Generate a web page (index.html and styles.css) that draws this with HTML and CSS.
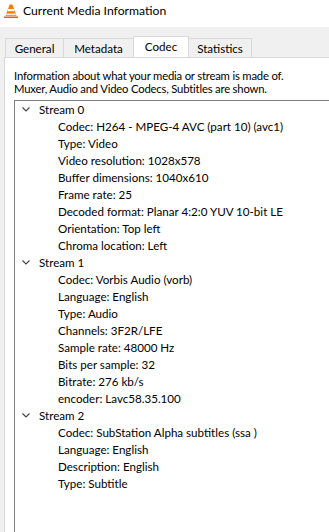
FILE: index.html
```html
<!DOCTYPE html>
<html lang="en">

<head>
  <meta charset="UTF-8">
  <meta name="viewport" content="width=device-width, initial-scale=1.0">
  <title>Current Media Information</title>
  <link rel="stylesheet" href="styles.css">
</head>

<body>
  <div class="titlebar">
    <svg class="cone" width="16" height="16" viewBox="0 0 16 16">
      <path d="M1 13.5 L15 13.5 L15 15 L1 15 Z" fill="#e85e00" />
      <path d="M2.5 13 L6.6 1.5 L9.4 1.5 L13.5 13 Z" fill="#f47c06" />
      <path d="M5.2 6 L10.8 6 L11.6 8.2 L4.4 8.2 Z" fill="#ffffff" />
      <path d="M3.6 10.6 L12.4 10.6 L13 12.3 L3 12.3 Z" fill="#ffffff" opacity="0.85" />
    </svg>
    <span class="title">Current Media Information</span>
  </div>

  <div class="dialog">
    <ul class="tabs">
      <li class="tab general">General</li>
      <li class="tab metadata">Metadata</li>
      <li class="tab codec active">Codec</li>
      <li class="tab statistics">Statistics</li>
    </ul>

    <div class="pane">
      <p class="desc">Information about what your media or stream is made of.<br>
        Muxer, Audio and Video Codecs, Subtitles are shown.</p>

      <div class="tree">
        <div class="stream">
          <div class="row head"><svg class="chev" width="8" height="5" viewBox="0 0 8 5"><path d="M0.5 0.5 L4 4 L7.5 0.5" fill="none" stroke="#444" stroke-width="1.1" /></svg>Stream 0</div>
          <div class="row item">Codec: H264 - MPEG-4 AVC (part 10) (avc1)</div>
          <div class="row item">Type: Video</div>
          <div class="row item">Video resolution: 1028x578</div>
          <div class="row item">Buffer dimensions: 1040x610</div>
          <div class="row item">Frame rate: 25</div>
          <div class="row item">Decoded format: Planar 4:2:0 YUV 10-bit LE</div>
          <div class="row item">Orientation: Top left</div>
          <div class="row item">Chroma location: Left</div>
        </div>
        <div class="stream">
          <div class="row head"><svg class="chev" width="8" height="5" viewBox="0 0 8 5"><path d="M0.5 0.5 L4 4 L7.5 0.5" fill="none" stroke="#444" stroke-width="1.1" /></svg>Stream 1</div>
          <div class="row item">Codec: Vorbis Audio (vorb)</div>
          <div class="row item">Language: English</div>
          <div class="row item">Type: Audio</div>
          <div class="row item">Channels: 3F2R/LFE</div>
          <div class="row item">Sample rate: 48000 Hz</div>
          <div class="row item">Bits per sample: 32</div>
          <div class="row item">Bitrate: 276 kb/s</div>
          <div class="row item">encoder: Lavc58.35.100</div>
        </div>
        <div class="stream">
          <div class="row head"><svg class="chev" width="8" height="5" viewBox="0 0 8 5"><path d="M0.5 0.5 L4 4 L7.5 0.5" fill="none" stroke="#444" stroke-width="1.1" /></svg>Stream 2</div>
          <div class="row item">Codec: SubStation Alpha subtitles (ssa )</div>
          <div class="row item">Language: English</div>
          <div class="row item">Description: English</div>
          <div class="row item">Type: Subtitle</div>
        </div>
      </div>
    </div>
  </div>
</body>

</html>
```

FILE: styles.css
```css
html,
body {
  margin: 0;
  height: 100%;
  overflow: hidden;
}

body {
  font-family: Lato, "Noto Sans", sans-serif;
  font-size: 11.6px;
  color: #000;
  background-color: #f0f0f0;
  display: flex;
  flex-direction: column;
}

.titlebar {
  height: 27px;
  box-sizing: border-box;
  background-color: #fff;
  display: flex;
  align-items: flex-start;
  padding: 3px 0 0 3px;
  gap: 4px;
}

.title {
  font-size: 12.2px;
  line-height: 16px;
  color: #000;
}

.dialog {
  flex: 1;
  display: flex;
  flex-direction: column;
  padding-top: 9px;
  padding-left: 4px;
}

.tabs {
  display: flex;
  list-style-type: none;
  margin: 0;
  padding: 0 0 0 1px;
  align-items: flex-end;
  height: 21px;
}

.tab {
  height: 19px;
  line-height: 19px;
  box-sizing: border-box;
  border: 1px solid #d9d9d9;
  border-bottom: none;
  border-right: none;
  text-align: center;
  background-color: #f0f0f0;
}

.general {
  width: 58px;
}

.metadata {
  width: 70px;
}

.codec {
  width: 56px;
}

.statistics {
  width: 63px;
  border-right: 1px solid #d9d9d9;
}

.tab.active {
  height: 22px;
  line-height: 19px;
  background-color: #fff;
  margin-bottom: -1px;
  border-right: 1px solid #d9d9d9;
}

.tab.active + .tab {
  border-left: none;
}

.pane {
  flex: 1;
  background-color: #fff;
  border: 1px solid #d9d9d9;
  border-right: none;
  border-bottom: none;
  padding: 11px 0 0 9px;
  display: flex;
  flex-direction: column;
}

.desc {
  margin: 0;
  font-size: 11.3px;
  letter-spacing: -0.2px;
  line-height: 13px;
}

.tree {
  flex: 1;
  border: 1px solid #828282;
  border-right: none;
  border-bottom: none;
  margin-top: 5px;
  padding-left: 7px;
}

.row {
  height: 17px;
  line-height: 17px;
  white-space: nowrap;
}

.head {
  display: flex;
  align-items: center;
}

.chev {
  margin-right: 9px;
}

.item {
  padding-left: 36px;
}
```
